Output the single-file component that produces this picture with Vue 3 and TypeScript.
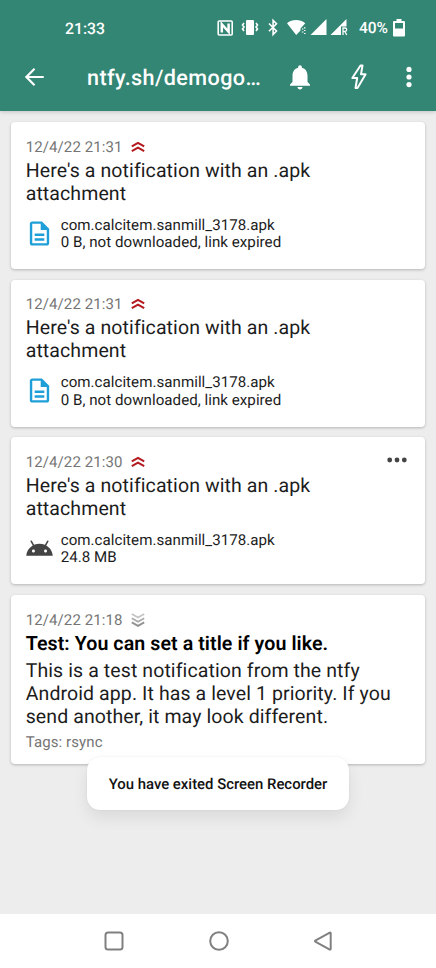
<script setup lang="ts">
interface Attachment {
  kind: 'file' | 'apk'
  name: string
  info: string
}
interface Notification {
  id: number
  date: string
  priority: 'high' | 'min'
  title?: string
  message: string
  attachment?: Attachment
  tags?: string
  menu?: boolean
}

const message = "Here's a notification with an .apk attachment"
const fileName = 'com.calcitem.sanmill_3178.apk'
const expired = '0 B, not downloaded, link expired'

const notifications: Notification[] = [
  { id: 1, date: '12/4/22 21:31', priority: 'high', message, attachment: { kind: 'file', name: fileName, info: expired } },
  { id: 2, date: '12/4/22 21:31', priority: 'high', message, attachment: { kind: 'file', name: fileName, info: expired } },
  { id: 3, date: '12/4/22 21:30', priority: 'high', message, attachment: { kind: 'apk', name: fileName, info: '24.8 MB' }, menu: true },
  {
    id: 4,
    date: '12/4/22 21:18',
    priority: 'min',
    title: 'Test: You can set a title if you like.',
    message: 'This is a test notification from the ntfy Android app. It has a level 1 priority. If you send another, it may look different.',
    tags: 'Tags: rsync',
  },
]
</script>

<template>
  <div class="screen">
    <header class="top">
      <div class="status">
        <span class="clock">21:33</span>
        <svg class="status-icons" viewBox="0 0 136 20" fill="#fff">
          <rect x="1.200" y="3" width="14" height="14" rx="1" fill="none" stroke="#fff" stroke-width="1.600" />
          <path d="M4.800 14.500V6.200L11.600 13.800V5.500" fill="none" stroke="#fff" stroke-width="2.500" />
          <rect x="29" y="2" width="8" height="15" rx="1" />
          <path d="M27 5l-1.500 2 1.500 2-1.500 2 1.500 2M39 5l1.500 2-1.500 2 1.500 2-1.500 2" fill="none" stroke="#fff" stroke-width="1.600" />
          <path d="M52 5.500l7.500 7.500-3.400 3.500v-14l3.400 3.300-7.500 7.500" fill="none" stroke="#fff" stroke-width="1.600" />
          <path d="M70 5.300C75 .9 83 .9 88.300 5.300L83.500 10.500v2L79.200 17z" />
          <path d="M84.800 11h1.700M84.800 14h1.700M87 9.800h1.500M87 12.500h1.500M87 15.500h1.500" stroke="#fff" stroke-width="1.200" />
          <path d="M93.500 17L109.500 1V17z" />
          <path d="M113.500 17L129.500 1V8.500h-5.500V17z" />
          <path d="M126 17v-7h2a1.700 1.700 0 0 1 0 3.400h-2M127.800 13.500l2 3.500" fill="none" stroke="#fff" stroke-width="1.300" />
        </svg>
        <span class="percent">40%</span>
        <svg class="battery" viewBox="0 0 12 18">
          <path d="M3.500 0h5v2H11a1 1 0 0 1 1 1v13.500a1 1 0 0 1-1 1H1a1 1 0 0 1-1-1V3a1 1 0 0 1 1-1h2.500zM2 4v5.500h8V4z" fill="#fff" fill-rule="evenodd" />
        </svg>
      </div>
      <div class="bar">
        <svg class="back" viewBox="0 0 24 24" fill="#fff"><path d="M21 11H7.300l5.900-5.900L11.800 3.700 3.500 12l8.300 8.300 1.400-1.400L7.300 13H21z" /></svg>
        <h1>ntfy.sh/demogo…</h1>
        <svg class="bell" viewBox="0 0 24 24" fill="#fff"><path d="M12 22c1.100 0 2-.9 2-2h-4c0 1.100.9 2 2 2zm6-6v-5c0-3.070-1.630-5.640-4.500-6.320V4c0-.83-.67-1.500-1.500-1.500s-1.500.67-1.500 1.500v.68C7.640 5.360 6 7.920 6 11v5l-2 2v1h16v-1z" /></svg>
        <svg class="bolt" viewBox="0 0 18 26" fill="none" stroke="#fff" stroke-width="2" stroke-linejoin="round"><path d="M10.500 1.500L2.300 14H7.200L5.500 24h2L15.600 10.300H11L12.500 1.500z" /></svg>
        <svg class="more" viewBox="0 0 6 22" fill="#fff"><circle cx="3" cy="3.400" r="2.600" /><circle cx="3" cy="11" r="2.600" /><circle cx="3" cy="18.600" r="2.600" /></svg>
      </div>
    </header>

    <main class="list">
      <article v-for="n in notifications" :key="n.id" class="card">
        <div class="meta">
          <span class="date">{{ n.date }}</span>
          <svg v-if="n.priority === 'high'" class="priority" viewBox="0 0 14 14" fill="none" stroke="#b3191f" stroke-width="2">
            <path d="M.8 6.300L7 2.800l6.200 3.500M.8 11.200L7 7.700l6.200 3.500" />
          </svg>
          <svg v-else class="priority" viewBox="0 0 14 14" fill="none" stroke-width="1.800">
            <path d="M.8 1L7 4.500 13.200 1" stroke="#c4c4c4" />
            <path d="M.8 5.200L7 8.700l6.200-3.500" stroke="#aaa" />
            <path d="M.8 9.400L7 12.900l6.200-3.500" stroke="#929292" />
          </svg>
          <svg v-if="n.menu" class="dots" viewBox="0 0 20 6" fill="#444"><circle cx="2.700" cy="3" r="2.400" /><circle cx="10" cy="3" r="2.400" /><circle cx="17.300" cy="3" r="2.400" /></svg>
        </div>
        <h2 v-if="n.title">{{ n.title }}</h2>
        <p class="message">{{ n.message }}</p>
        <div v-if="n.attachment" class="attachment">
          <svg v-if="n.attachment.kind === 'file'" viewBox="0 0 24 24" fill="#1f9fd8"><path d="M8 16h8v2H8zm0-4h8v2H8zm6-10H6c-1.100 0-2 .9-2 2v16c0 1.100.89 2 1.990 2H18c1.100 0 2-.9 2-2V8l-6-6zm4 18H6V4h7v5h5v11z" /></svg>
          <svg v-else viewBox="0 0 24 24" fill="#444"><path d="M17.600 9.480l1.840-3.180c.16-.31.04-.69-.26-.85-.29-.15-.65-.06-.83.22l-1.880 3.240c-2.860-1.210-6.080-1.210-8.940 0L5.650 5.670c-.19-.29-.58-.38-.87-.2-.28.18-.37.54-.22.83L6.400 9.480C3.300 11.250 1.280 14.440 1 18h22c-.28-3.560-2.300-6.750-5.400-8.520zM7 15.250c-.69 0-1.250-.56-1.250-1.250s.56-1.250 1.250-1.250 1.250.56 1.250 1.250-.56 1.250-1.250 1.250zm10 0c-.69 0-1.250-.56-1.250-1.250s.56-1.250 1.250-1.250 1.250.56 1.250 1.250-.56 1.250-1.250 1.250z" /></svg>
          <div>
            <div>{{ n.attachment.name }}</div>
            <div>{{ n.attachment.info }}</div>
          </div>
        </div>
        <div v-if="n.tags" class="tags">{{ n.tags }}</div>
      </article>
    </main>

    <div class="toast">You have exited Screen Recorder</div>

    <nav class="nav">
      <svg viewBox="0 0 20 20"><rect x="1.500" y="1.500" width="17" height="17" rx="2.500" /></svg>
      <svg viewBox="0 0 20 20"><circle cx="10" cy="10" r="8.800" /></svg>
      <svg viewBox="0 0 20 20"><path d="M17.700 2.200v15.800a.6.6 0 0 1-.9.500L2.300 10.700a.7.700 0 0 1 0-1.200L16.800 1.600a.6.600 0 0 1 .9.600z" /></svg>
    </nav>
  </div>
</template>

<style>
body {
  margin: 0;
}
</style>

<style scoped>
.screen {
  position: relative;
  display: flex;
  flex-direction: column;
  width: 436px;
  height: 968px;
  overflow: hidden;
  background: #ededed;
  color: #1c1c1c;
  font-family: Roboto, "Liberation Sans", sans-serif;
  text-rendering: geometricPrecision;
}
svg {
  display: block;
  flex: none;
}
.top {
  box-sizing: border-box;
  height: 111px;
  flex: none;
  background: #338574;
  color: #fff;
  box-shadow: 0 1px 4px rgba(0, 0, 0, 0.18);
}
.status {
  display: flex;
  align-items: center;
  height: 44px;
  padding: 12px 0 0 65px;
  box-sizing: border-box;
}
.clock {
  width: 152px;
  font-size: 15.800px;
  font-weight: 500;
}
.status-icons {
  width: 136px;
  height: 20px;
}
.percent {
  width: 34px;
  margin-left: 6px;
  font-size: 15.500px;
  font-weight: 500;
}
.battery {
  width: 12px;
  height: 18px;
  margin-top: -1px;
}
.bar {
  display: flex;
  align-items: center;
  height: 66px;
  padding-left: 21px;
}
.back {
  width: 26px;
  height: 26px;
}
h1 {
  width: 198px;
  box-sizing: border-box;
  margin: 0;
  padding: 2px 0 0 40px;
  white-space: nowrap;
  font-size: 21.600px;
  font-weight: 500;
  letter-spacing: 0.4px;
}
.bell {
  width: 30px;
  height: 30px;
  margin-left: 40px;
}
.bolt {
  width: 18px;
  height: 26px;
  margin-left: 35px;
}
.more {
  width: 6px;
  height: 22px;
  margin-left: 38px;
}
.list {
  display: flex;
  flex: 1;
  flex-direction: column;
  gap: 10.700px;
  padding: 11px 11px 0 10.700px;
}
.card {
  box-sizing: border-box;
  height: 147px;
  padding: 15.500px 15px 0;
  border-radius: 4px;
  background: #fff;
  box-shadow: 0 1px 3px rgba(0, 0, 0, 0.24);
}
.card:last-child {
  height: 169px;
}
.meta {
  display: flex;
  align-items: center;
  height: 18px;
  color: #757575;
  font-size: 15px;
  font-weight: 400;
  letter-spacing: 0.1px;
}
.date {
  width: 105px;
}
.priority {
  width: 14px;
  height: 14px;
}
.dots {
  width: 20px;
  height: 6px;
  margin: -3px 3px 0 auto;
}
h2 {
  margin: 3px 0 4px;
  color: #000;
  font-size: 19.600px;
  font-weight: 650;
  line-height: 23px;
  letter-spacing: 0.080px;
  white-space: nowrap;
}
.message {
  margin: 3px 0 0;
  font-size: 19.500px;
  font-weight: 400;
  line-height: 23px;
  letter-spacing: 0.1px;
}
.attachment {
  display: flex;
  align-items: center;
  gap: 7px;
  margin: 11px 0 0 -1px;
  font-size: 15.100px;
  font-weight: 400;
  line-height: 17.600px;
  letter-spacing: 0.040px;
}
.attachment > div {
  padding-top: 1px;
}
.attachment svg {
  width: 29px;
  height: 29px;
  margin-top: -1px;
}
.tags {
  margin-top: 5.500px;
  color: #757575;
  font-size: 15px;
  font-weight: 400;
  line-height: 18px;
  letter-spacing: 0.1px;
}
.toast {
  position: absolute;
  top: 757px;
  left: 87px;
  width: 262px;
  height: 53px;
  border-radius: 13px;
  background: #fff;
  box-shadow: 0 8px 16px rgba(0, 0, 0, 0.08), 0 0 2px rgba(0, 0, 0, 0.08);
  color: #111;
  font-size: 14.900px;
  font-weight: 500;
  line-height: 54px;
  text-align: center;
}
.nav {
  display: flex;
  flex: none;
  align-items: center;
  gap: 84.500px;
  height: 54px;
  box-sizing: border-box;
  padding-left: 104px;
  background: #fff;
}
.nav svg {
  width: 20px;
  height: 20px;
  fill: none;
  stroke: #808080;
  stroke-width: 2;
}
</style>
